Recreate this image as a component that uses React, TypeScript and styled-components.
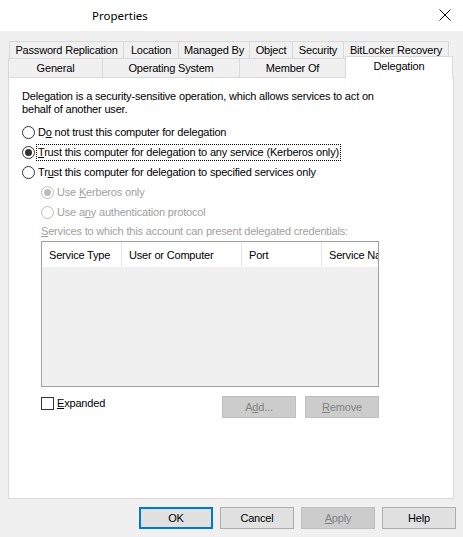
import React from 'react'
import styled, { createGlobalStyle } from 'styled-components'

const GlobalStyle = createGlobalStyle`
	html, body {
		margin: 0;
		padding: 0;
		background: #f0f0f0;
	}
	body {
		font-family: 'Liberation Sans', Arial, sans-serif;
		font-size: 11px;
		letter-spacing: -0.18px;
		color: #000;
	}
`

type TabDef = { label: string; width: number; selected?: boolean }

const topRow: TabDef[] = [
	{ label: 'Password Replication', width: 115 },
	{ label: 'Location', width: 56 },
	{ label: 'Managed By', width: 72 },
	{ label: 'Object', width: 44 },
	{ label: 'Security', width: 52 },
	{ label: 'BitLocker Recovery', width: 106 },
]

const bottomRow: TabDef[] = [
	{ label: 'General', width: 95 },
	{ label: 'Operating System', width: 138 },
	{ label: 'Member Of', width: 107 },
	{ label: 'Delegation', width: 108, selected: true },
]

const columns = [
	{ label: 'Service Type', width: 80 },
	{ label: 'User or Computer', width: 120 },
	{ label: 'Port', width: 80 },
	{ label: 'Service Name', width: 80 },
]

export default function App() {
	return (
		<>
			<GlobalStyle />
			<Window>
				<TitleBar>
					<Title>Properties</Title>
					<CloseButton>
						<svg width="12" height="12" viewBox="0 0 12 12">
							<path d="M0.5 0.5 L11.5 11.5 M11.5 0.5 L0.5 11.5" stroke="#000" strokeWidth="1" fill="none" />
						</svg>
					</CloseButton>
				</TitleBar>
				<Body>
					<TabRow indent={9} rowHeight={17}>
						{topRow.map(t => (
							<Tab key={t.label} width={t.width}>
								{t.label}
							</Tab>
						))}
					</TabRow>
					<TabRow indent={8} rowHeight={19}>
						{bottomRow.map(t => (
							<Tab key={t.label} width={t.width} selected={t.selected}>
								{t.label}
							</Tab>
						))}
					</TabRow>
					<Panel>
						<Description>
							Delegation is a security-sensitive operation, which allows services to act on
							<br />
							behalf of another user.
						</Description>
						<Options>
							<OptionRow>
								<Radio />
								<OptionLabel>
									D<u>o</u> not trust this computer for delegation
								</OptionLabel>
							</OptionRow>
							<OptionRow>
								<Radio checked />
								<OptionLabel focused>
									<u>T</u>rust this computer for delegation to any service (Kerberos only)
								</OptionLabel>
							</OptionRow>
							<OptionRow>
								<Radio />
								<OptionLabel>
									Tr<u>u</u>st this computer for delegation to specified services only
								</OptionLabel>
							</OptionRow>
							<SubOptions>
								<OptionRow>
									<Radio checked disabled />
									<OptionLabel disabled>
										Use <u>K</u>erberos only
									</OptionLabel>
								</OptionRow>
								<OptionRow>
									<Radio disabled />
									<OptionLabel disabled>
										Use a<u>n</u>y authentication protocol
									</OptionLabel>
								</OptionRow>
								<ServicesLabel>
									<u>S</u>ervices to which this account can present delegated credentials:
								</ServicesLabel>
								<ListView>
									<ListHeader>
										{columns.map(c => (
											<HeaderCell key={c.label} width={c.width}>
												{c.label}
											</HeaderCell>
										))}
									</ListHeader>
								</ListView>
								<ListFooter>
									<CheckRow>
										<CheckBox />
										<span>
											<u>E</u>xpanded
										</span>
									</CheckRow>
									<ButtonGroup gap={9}>
										<Button disabled>
											A<u>d</u>d...
										</Button>
										<Button disabled>
											<u>R</u>emove
										</Button>
									</ButtonGroup>
								</ListFooter>
							</SubOptions>
						</Options>
					</Panel>
					<Footer>
						<Button primary>OK</Button>
						<Button>Cancel</Button>
						<Button disabled>
							<u>A</u>pply
						</Button>
						<Button>Help</Button>
					</Footer>
				</Body>
			</Window>
		</>
	)
}

const Window = styled.div`
	width: 463px;
	height: 537px;
	display: flex;
	flex-direction: column;
	background: #f0f0f0;
	overflow: hidden;
`

const TitleBar = styled.div`
	height: 31px;
	background: #fff;
	display: flex;
	align-items: center;
	justify-content: space-between;
	padding: 0 12px 0 92px;
	box-sizing: border-box;
	flex-shrink: 0;
`

const Title = styled.div`
	font-family: 'Noto Sans', 'Liberation Sans', sans-serif;
	font-size: 11.5px;
	letter-spacing: 0;
	margin-top: -1px;
`

const CloseButton = styled.div`
	display: flex;
	align-items: center;
	margin-top: -1px;
`

const Body = styled.div`
	display: flex;
	flex-direction: column;
	padding-top: 10px;
`

const TabRow = styled.div<{ indent: number; rowHeight: number }>`
	display: flex;
	align-items: flex-start;
	padding-left: ${p => p.indent}px;
	height: ${p => p.rowHeight}px;
`

const Tab = styled.div<{ width: number; selected?: boolean }>`
	box-sizing: border-box;
	width: ${p => p.width}px;
	height: ${p => (p.selected ? '22px' : '100%')};
	margin-left: -1px;
	margin-top: ${p => (p.selected ? '-2px' : '0')};
	border: 1px solid #d9d9d9;
	border-bottom: none;
	background: ${p => (p.selected ? '#fff' : '#f0f0f0')};
	position: ${p => (p.selected ? 'relative' : 'static')};
	z-index: ${p => (p.selected ? 1 : 0)};
	display: flex;
	justify-content: center;
	align-items: ${p => (p.selected ? 'flex-start' : 'center')};
	padding-top: ${p => (p.selected ? '3px' : '0')};
	white-space: nowrap;
	line-height: 13px;

	&:first-child {
		margin-left: 0;
	}
`

const Panel = styled.div`
	box-sizing: border-box;
	margin-left: 8px;
	width: 446px;
	height: 422px;
	background: #fff;
	border: 1px solid #d9d9d9;
	padding: 12px 13px 0;
	display: flex;
	flex-direction: column;
`

const Description = styled.div`
	line-height: 13px;
`

const Options = styled.div`
	display: flex;
	flex-direction: column;
	margin-top: 6px;
`

const OptionRow = styled.div`
	display: flex;
	align-items: center;
	height: 20px;
`

const Radio = styled.span<{ checked?: boolean; disabled?: boolean }>`
	box-sizing: border-box;
	width: 13px;
	height: 13px;
	border-radius: 50%;
	border: 1px solid ${p => (p.disabled ? '#bcbcbc' : '#333')};
	background: #fff;
	display: flex;
	align-items: center;
	justify-content: center;
	flex-shrink: 0;

	&::after {
		content: '';
		display: ${p => (p.checked ? 'block' : 'none')};
		width: 7px;
		height: 7px;
		border-radius: 50%;
		background: ${p => (p.disabled ? '#bcbcbc' : '#333')};
	}
`

const OptionLabel = styled.span<{ focused?: boolean; disabled?: boolean }>`
	margin-left: 2px;
	padding: 1px 1px;
	line-height: 13px;
	white-space: nowrap;
	color: ${p => (p.disabled ? '#a0a0a0' : '#000')};
	outline: ${p => (p.focused ? '1px dotted #000' : 'none')};
	outline-offset: 0;
`

const SubOptions = styled.div`
	display: flex;
	flex-direction: column;
	margin-left: 19px;
`

const ServicesLabel = styled.div`
	color: #a0a0a0;
	line-height: 14px;
	margin-top: 2px;
	white-space: nowrap;
`

const ListView = styled.div`
	box-sizing: border-box;
	margin-top: 3px;
	width: 338px;
	height: 146px;
	border: 1px solid #a0a0a0;
	background: #f0f0f0;
	overflow: hidden;
`

const ListHeader = styled.div`
	display: flex;
	height: 25px;
	background: #fff;
`

const HeaderCell = styled.div<{ width: number }>`
	box-sizing: border-box;
	flex: 0 0 ${p => p.width}px;
	padding-left: 7px;
	border-right: 1px solid #e5e5e5;
	display: flex;
	align-items: center;
	white-space: nowrap;
	overflow: hidden;
`

const ListFooter = styled.div`
	display: flex;
	align-items: flex-start;
	justify-content: space-between;
	width: 338px;
	margin-top: 9px;
`

const CheckRow = styled.div`
	display: flex;
	align-items: center;
	gap: 3px;
	margin-top: 1px;
	line-height: 13px;
`

const CheckBox = styled.span`
	box-sizing: border-box;
	width: 13px;
	height: 13px;
	border: 1px solid #333;
	background: #fff;
`

const ButtonGroup = styled.div<{ gap: number }>`
	display: flex;
	gap: ${p => p.gap}px;
`

const Button = styled.button<{ primary?: boolean; disabled?: boolean }>`
	box-sizing: border-box;
	width: 74px;
	height: 22px;
	padding: 0;
	font-family: 'Liberation Sans', Arial, sans-serif;
	font-size: 11px;
	letter-spacing: -0.18px;
	background: ${p => (p.disabled ? '#cccccc' : '#e1e1e1')};
	color: ${p => (p.disabled ? '#838383' : '#000')};
	border: ${p => (p.primary ? '2px solid #0078d7' : p.disabled ? '1px solid #bfbfbf' : '1px solid #adadad')};
	display: flex;
	align-items: center;
	justify-content: center;
`

const Footer = styled.div`
	display: flex;
	justify-content: flex-end;
	gap: 7px;
	padding-right: 7px;
	margin-top: 8px;
`
